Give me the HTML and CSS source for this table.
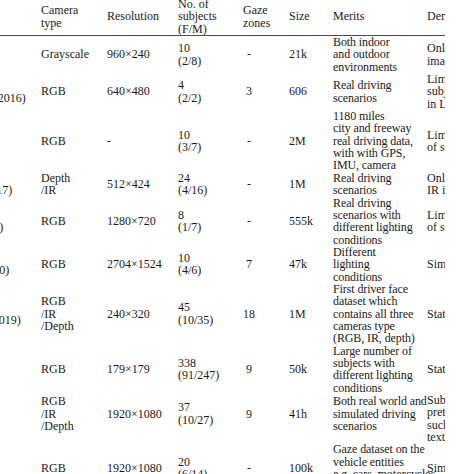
FILE: index.html
```html
<!DOCTYPE html>
<html>
<head>
<meta charset="utf-8">
<link rel="stylesheet" href="styles.css">
</head>
<body>
<table class="tbl">
  <colgroup>
    <col class="c0"><col class="c1"><col class="c2"><col class="c3"><col class="c4"><col class="c5"><col class="c6"><col class="c7">
  </colgroup>
  <thead>
    <tr>
      <th>Dataset</th>
      <th>Camera<br>type</th>
      <th>Resolution</th>
      <th>No. of<br>subjects<br>(F/M)</th>
      <th>Gaze<br>zones</th>
      <th>Size</th>
      <th>Merits</th>
      <th>Demerits</th>
    </tr>
  </thead>
  <tbody>
    <tr>
      <td>Lyu</td>
      <td>Grayscale</td>
      <td>960×240</td>
      <td>10<br>(2/8)</td>
      <td class="gz">-</td>
      <td>21k</td>
      <td class="mr">Both indoor<br>and outdoor<br>environments</td>
      <td>Only grayscale<br>images</td>
    </tr>
    <tr>
      <td>Vora<br>Vorah et al. (2016)</td>
      <td>RGB</td>
      <td>640×480</td>
      <td>4<br>(2/2)</td>
      <td class="gz">3</td>
      <td>606</td>
      <td class="mr">Real driving<br>scenarios</td>
      <td>Limited number of<br>subjects, all male<br>in LISA</td>
    </tr>
    <tr>
      <td>Brain4Cars</td>
      <td>RGB</td>
      <td>-</td>
      <td>10<br>(3/7)</td>
      <td class="gz">-</td>
      <td>2M</td>
      <td class="mr">1180 miles<br>city and freeway<br>real driving data,<br>with with GPS,<br>IMU, camera</td>
      <td>Limited number<br>of subjects</td>
    </tr>
    <tr>
      <td>DriveAHead<br>Schwarz (2017)</td>
      <td>Depth<br>/IR</td>
      <td>512×424</td>
      <td>24<br>(4/16)</td>
      <td class="gz">-</td>
      <td>1M</td>
      <td class="mr">Real driving<br>scenarios</td>
      <td>Only depth and<br>IR images</td>
    </tr>
    <tr>
      <td>DR(eye)VE<br>Palazi, (2018)</td>
      <td>RGB</td>
      <td>1280×720</td>
      <td>8<br>(1/7)</td>
      <td class="gz">-</td>
      <td>555k</td>
      <td class="mr">Real driving<br>scenarios with<br>different lighting<br>conditions</td>
      <td>Limited number<br>of subjects</td>
    </tr>
    <tr>
      <td>LISA v2<br>Rangesh(2020)</td>
      <td>RGB</td>
      <td>2704×1524</td>
      <td>10<br>(4/6)</td>
      <td class="gz">7</td>
      <td>47k</td>
      <td class="mr">Different<br>lighting<br>conditions</td>
      <td>Simulated</td>
    </tr>
    <tr>
      <td>DD-Pose<br>Roth et al. (2019)</td>
      <td>RGB<br>/IR<br>/Depth</td>
      <td>240×320</td>
      <td>45<br>(10/35)</td>
      <td class="gz">18</td>
      <td>1M</td>
      <td class="mr">First driver face<br>dataset which<br>contains all three<br>cameras type<br>(RGB, IR, depth)</td>
      <td>Static</td>
    </tr>
    <tr>
      <td>DGW</td>
      <td>RGB</td>
      <td>179×179</td>
      <td>338<br>(91/247)</td>
      <td class="gz">9</td>
      <td>50k</td>
      <td class="mr">Large number of<br>subjects with<br>different lighting<br>conditions</td>
      <td>Static</td>
    </tr>
    <tr class="lifted">
      <td>DMD</td>
      <td>RGB<br>/IR<br>/Depth</td>
      <td>1920×1080</td>
      <td>37<br>(10/27)</td>
      <td class="gz">9</td>
      <td>41h</td>
      <td class="mr">Both real world and<br>simulated driving<br>scenarios</td>
      <td class="dm">Subjects are<br>pretending actions<br>such as<br>texting</td>
    </tr>
    <tr>
      <td>LBW</td>
      <td>RGB</td>
      <td>1920×1080</td>
      <td>20<br>(6/14)</td>
      <td class="gz">-</td>
      <td>100k</td>
      <td class="mr">Gaze dataset on the<br>vehicle entities<br>e.g. cars, motorcycles,<br>pedestrians</td>
      <td>Simulated</td>
    </tr>
  </tbody>
</table>
</body>
</html>
```

FILE: styles.css
```css
html, body {
  margin: 0;
  padding: 0;
  background: #ffffff;
  overflow: hidden;
}

body {
  width: 474px;
  height: 474px;
}

.tbl {
  margin-left: -64px;
  margin-top: -2px;
  border-collapse: collapse;
  table-layout: fixed;
  width: 509px;
  font-family: "Liberation Serif", "Times New Roman", serif;
  font-size: 12px;
  line-height: 12.35px;
  color: #1a1a1a;
}

.c0 { width: 105px; }
.c1 { width: 66px; }
.c2 { width: 71px; }
.c3 { width: 65px; }
.c4 { width: 46px; }
.c5 { width: 44px; }
.c6 { width: 94px; }
.c7 { width: 18px; }

.tbl th,
.tbl td {
  padding: 0;
  text-align: left;
  vertical-align: middle;
  white-space: nowrap;
  overflow: hidden;
  font-weight: normal;
}

.tbl td.mr {
  overflow: visible;
  letter-spacing: -0.1px;
}

.tbl thead th {
  border-bottom: 1px solid #4a4a4a;
  height: 37px;
}

.tbl td.gz {
  text-align: center;
  padding-right: 34px;
}

.tbl tr.lifted td {
  padding-bottom: 10px;
}

.tbl tr.lifted td.dm {
  padding-bottom: 0;
}
```
